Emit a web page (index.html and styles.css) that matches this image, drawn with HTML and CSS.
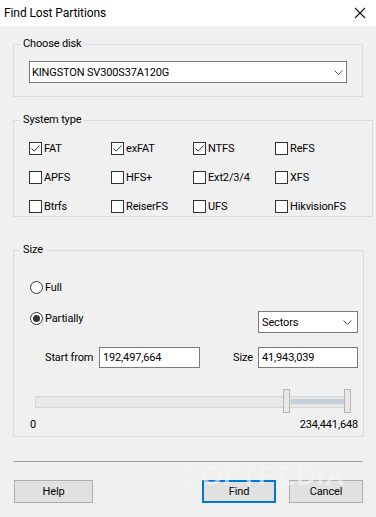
FILE: index.html
```html
<!DOCTYPE html>
<html lang="en">

<head>
    <meta charset="UTF-8">
    <meta name="viewport" content="width=device-width, initial-scale=1.0">
    <title>Find Lost Partitions</title>
    <link rel="stylesheet" href="styles.css">
</head>

<body>
    <div class="window">
        <div class="titlebar">
            <span class="title">Find Lost Partitions</span>
            <svg class="close" width="12" height="12" viewBox="0 0 12 12">
                <path d="M1 1 L11 11 M11 1 L1 11" stroke="#111" stroke-width="1.1" fill="none" />
            </svg>
        </div>

        <div class="dialog">
            <!-- Choose disk -->
            <fieldset class="group disk">
                <legend>Choose disk</legend>
                <div class="combo">
                    <span>KINGSTON SV300S37A120G</span>
                    <svg class="chevron" width="9" height="5" viewBox="0 0 9 5">
                        <path d="M0.5 0.5 L4.5 4.5 L8.5 0.5" stroke="#555" stroke-width="1" fill="none" />
                    </svg>
                </div>
            </fieldset>

            <!-- System type -->
            <fieldset class="group types">
                <legend>System type</legend>
                <div class="check-grid">
                    <label class="check"><span class="box"><svg viewBox="0 0 11 11"><path d="M1.5 5.5 L4.2 8.2 L9.5 2.5" /></svg></span>FAT</label>
                    <label class="check"><span class="box"><svg viewBox="0 0 11 11"><path d="M1.5 5.5 L4.2 8.2 L9.5 2.5" /></svg></span>exFAT</label>
                    <label class="check"><span class="box"><svg viewBox="0 0 11 11"><path d="M1.5 5.5 L4.2 8.2 L9.5 2.5" /></svg></span>NTFS</label>
                    <label class="check"><span class="box"></span>ReFS</label>

                    <label class="check"><span class="box"></span>APFS</label>
                    <label class="check"><span class="box"></span>HFS+</label>
                    <label class="check"><span class="box"></span>Ext2/3/4</label>
                    <label class="check"><span class="box"></span>XFS</label>

                    <label class="check"><span class="box"></span>Btrfs</label>
                    <label class="check"><span class="box"></span>ReiserFS</label>
                    <label class="check"><span class="box"></span>UFS</label>
                    <label class="check"><span class="box"></span>HikvisionFS</label>
                </div>
            </fieldset>

            <!-- Size -->
            <fieldset class="group size">
                <legend>Size</legend>
                <div class="radio-row">
                    <label class="radio"><span class="dot"></span>Full</label>
                </div>
                <div class="radio-row partial">
                    <label class="radio"><span class="dot on"></span>Partially</label>
                    <div class="combo unit">
                        <span>Sectors</span>
                        <svg class="chevron" width="9" height="5" viewBox="0 0 9 5">
                            <path d="M0.5 0.5 L4.5 4.5 L8.5 0.5" stroke="#555" stroke-width="1" fill="none" />
                        </svg>
                    </div>
                </div>
                <div class="range-row">
                    <span class="field-label">Start from</span>
                    <span class="field">192,497,664</span>
                    <span class="field-label size-label">Size</span>
                    <span class="field">41,943,039</span>
                </div>
                <div class="slider">
                    <div class="track"></div>
                    <div class="fill" style="left: 81%; width: 16.8%;"></div>
                    <span class="thumb" style="left: 78.4%;"></span>
                    <span class="thumb" style="left: 97.8%;"></span>
                </div>
                <div class="scale">
                    <span>0</span>
                    <span>234,441,648</span>
                </div>
            </fieldset>

            <div class="separator"></div>

            <div class="buttons">
                <button class="btn help">Help</button>
                <button class="btn find">Find</button>
                <button class="btn cancel">Cancel</button>
            </div>
        </div>

        <div class="watermark">SOFTPEDIA<sup>®</sup></div>
    </div>
</body>

</html>
```

FILE: styles.css
```css
body {
    margin: 0;
    font-family: Roboto, "Liberation Sans", sans-serif;
    font-size: 11px;
    letter-spacing: -0.15px;
    color: #000;
    background: #f0f0f0;
}

.window {
    position: relative;
    width: 376px;
    height: 517px;
    background: #f0f0f0;
    overflow: hidden;
}

.titlebar {
    height: 26px;
    background: #fff;
    display: flex;
    align-items: center;
    justify-content: space-between;
    padding: 0 10px 0 4px;
}

.title {
    font-size: 12px;
    letter-spacing: -0.1px;
    color: #000;
}

.close {
    display: block;
}

.dialog {
    padding: 0 13px;
}

.group {
    border: 1px solid #dcdcdc;
    margin: 0;
    padding: 0 15px;
}

.group legend {
    margin-left: -9px;
    padding: 0 3px;
    line-height: 14px;
    height: 14px;
}

.disk {
    margin-top: 11px;
    padding-top: 10px;
    padding-bottom: 13px;
}

.combo {
    height: 22px;
    box-sizing: border-box;
    background: #fff;
    border: 1px solid #7a7a7a;
    display: flex;
    align-items: center;
    justify-content: space-between;
    padding: 0 3px 0 2px;
}

.chevron {
    display: block;
}

/* System type */

.types {
    margin-top: 16px;
    padding-top: 13px;
    padding-bottom: 2px;
}

.check-grid {
    display: grid;
    grid-template-columns: repeat(4, 82px);
    grid-auto-rows: 16px;
    row-gap: 13px;
}

.check {
    display: flex;
    align-items: center;
    gap: 2px;
    white-space: nowrap;
}

.box {
    width: 13px;
    height: 13px;
    box-sizing: border-box;
    border: 1px solid #333;
    background: #fff;
    flex-shrink: 0;
}

.box svg {
    display: block;
    width: 11px;
    height: 11px;
}

.box path {
    fill: none;
    stroke: #333;
    stroke-width: 1;
}

/* Size */

.size {
    margin-top: 26px;
    padding: 22px 5px 4px 15px;
}

.radio-row {
    display: flex;
    justify-content: space-between;
    align-items: flex-start;
}

.partial {
    margin-top: 16px;
}

.radio {
    display: flex;
    align-items: center;
    gap: 2px;
    height: 16px;
    margin-left: 1px;
}

.partial .radio {
    margin-top: -1px;
}

.dot {
    width: 13px;
    height: 13px;
    box-sizing: border-box;
    border: 1px solid #333;
    border-radius: 50%;
    background: #fff;
    display: flex;
    align-items: center;
    justify-content: center;
}

.dot.on::after {
    content: "";
    width: 7px;
    height: 7px;
    border-radius: 50%;
    background: #333;
}

.unit {
    width: 100px;
    padding: 0 5px 0 3px;
}

.range-row {
    display: flex;
    align-items: center;
    margin-top: 14px;
    white-space: nowrap;
}

.field-label {
    margin-left: 16px;
    width: 54px;
}

.size-label {
    margin-left: 33px;
    width: 25px;
}

.field {
    width: 101px;
    height: 21px;
    box-sizing: border-box;
    background: #fff;
    border: 1px solid #7a7a7a;
    padding-left: 3px;
    display: flex;
    align-items: center;
}

.range-row .field:last-child {
    width: 100px;
}

.slider {
    position: relative;
    height: 24px;
    margin: 21px 7px 0 6px;
}

.track {
    position: absolute;
    left: 0;
    right: 2px;
    top: 7px;
    height: 12px;
    box-sizing: border-box;
    background: #e7e7e7;
    border: 1px solid #d6d6d6;
}

.fill {
    position: absolute;
    top: 10px;
    height: 5px;
    background: #c4ced9;
}

.thumb {
    position: absolute;
    top: 0;
    width: 7px;
    height: 24px;
    box-sizing: border-box;
    background: #e7e7e7;
    border: 1px solid #b5b5b5;
}

.scale {
    display: flex;
    justify-content: space-between;
    margin-top: 5px;
    padding-left: 1px;
    line-height: 14px;
}

.separator {
    margin-top: 24px;
    border-top: 1px solid #a0a0a0;
}

.buttons {
    display: flex;
    margin-top: 18px;
}

.btn {
    height: 23px;
    width: 74px;
    font-family: inherit;
    font-size: 11px;
    letter-spacing: -0.15px;
    color: #000;
    background: #e1e1e1;
    border: 1px solid #adadad;
    padding: 0;
}

.help {
    width: 79px;
    margin-left: 1px;
}

.find {
    margin-left: auto;
    border: 2px solid #0078d7;
}

.cancel {
    margin-left: 13px;
}

.watermark {
    position: absolute;
    left: 182px;
    top: 461px;
    font-family: "Liberation Sans", sans-serif;
    font-weight: bold;
    font-size: 27px;
    letter-spacing: 1px;
    color: rgba(255, 255, 255, 0.6);
    text-shadow: 0 0 1px rgba(0, 0, 0, 0.06);
    pointer-events: none;
}

.watermark sup {
    font-size: 9px;
    vertical-align: 14px;
    margin-left: 1px;
}
```
